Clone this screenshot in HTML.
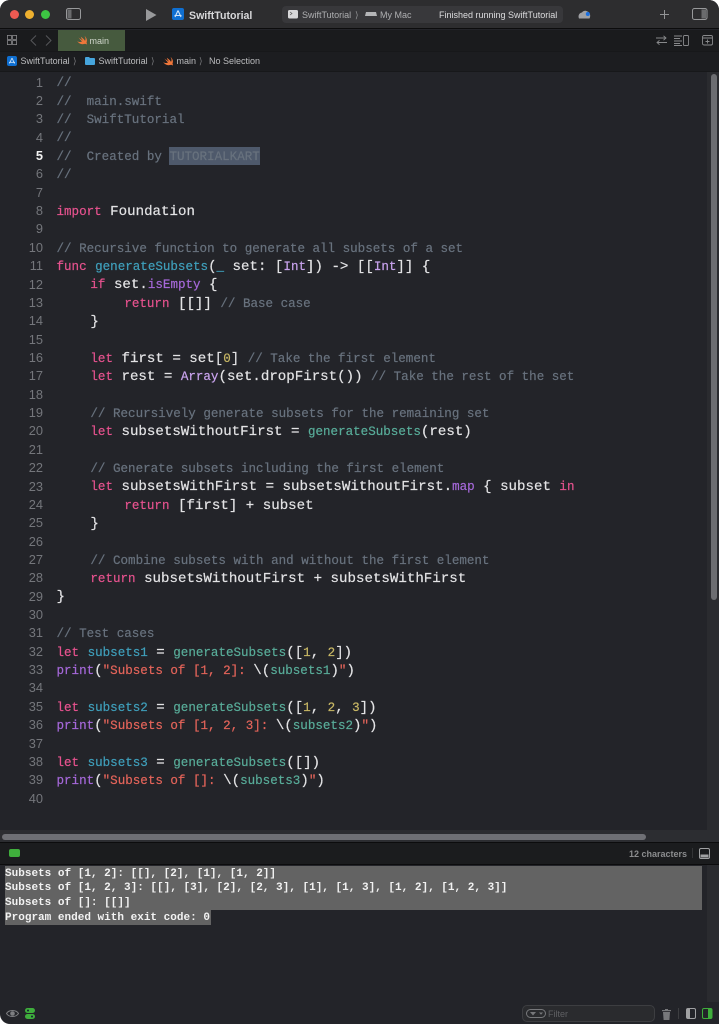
<!DOCTYPE html>
<html><head><meta charset="utf-8"><style>
html,body{margin:0;padding:0;background:#fff;width:719px;height:1024px;overflow:hidden}
*{box-sizing:border-box}
#w{position:absolute;left:0;top:0;width:719px;height:1024px;background:#232429;border-radius:10px 10px 0 10px;overflow:hidden;font-family:"Liberation Sans",sans-serif}
.a{position:absolute}
.t{position:absolute;white-space:pre;font-size:9px;line-height:12px;color:#c4c5c7}
#code{position:absolute;left:56.5px;top:74.4px;font:14.13px "Liberation Mono",monospace;color:#e3e3e5;-webkit-text-stroke:.2px}
#code .l{white-space:pre}
#nums{position:absolute;left:10px;width:33px;top:73.6px;font:12.8px "Liberation Sans",sans-serif;color:#74767b;text-align:right}
.l{height:18.36px;line-height:18.36px}
.c,.k,.f,.g,.y,.p,.q,.s,.v{font-size:12.55px}
.c{color:#68727e}.k{color:#e6528e}.f{color:#3f9fbb}.g{color:#58ac99}.y{color:#c9b865}.p{color:#a568d9}.q{color:#c9a3ee}.s{color:#e4645a}.v{color:#3f9fbb}
#con{position:absolute;left:5px;top:866.5px;font:bold 11.03px "Liberation Mono",monospace;color:#f2f2f2}
#con div{height:14.7px;line-height:14.7px;white-space:pre}
svg{position:absolute;overflow:visible}
</style></head><body><div id="w">
<!-- title bar -->
<div class="a" style="left:0;top:0;width:719px;height:29px;background:#2d2d2f;border-bottom:1px solid #0c0c0d"></div>
<div class="a" style="left:10px;top:10px;width:9px;height:9px;border-radius:50%;background:#ee5a52"></div>
<div class="a" style="left:25px;top:10px;width:9px;height:9px;border-radius:50%;background:#eeb02f"></div>
<div class="a" style="left:41px;top:10px;width:9px;height:9px;border-radius:50%;background:#3dc443"></div>
<svg style="left:66px;top:8px" width="16" height="13"><rect x=".5" y=".5" width="14" height="11" rx="2" fill="none" stroke="#98999b"/><rect x="1.5" y="1.5" width="4" height="9" fill="#6a6b6d"/></svg>
<svg style="left:145px;top:8px" width="12" height="13"><path d="M1 1 L11.5 7 L1 13Z" fill="#98999b"/></svg>
<svg style="left:172px;top:8px" width="12" height="12"><rect width="12" height="12" rx="2" fill="#0f6fd1"/><path d="M6 2.5 L3 9 M6 2.5 L9 9 M2.5 7.5 H9.5" stroke="#cfe3f8" stroke-width="1.1" fill="none"/></svg>
<div class="t" style="left:189px;top:9.5px;font-size:10.6px;font-weight:bold;color:#d8d8da">SwiftTutorial</div>
<div class="a" style="left:282px;top:6px;width:281px;height:17px;border-radius:4px;background:#38383b"></div>
<svg style="left:288px;top:10px" width="10" height="9"><rect width="10" height="8.5" rx="1.5" fill="#d8d8da"/><path d="M2 2 L4 3.5 L2 5" stroke="#555" fill="none" stroke-width=".7"/></svg>
<div class="t" style="left:302px;top:9px;color:#aeafb1">SwiftTutorial</div>
<div class="t" style="left:355px;top:9px;color:#8f9092">⟩</div>
<svg style="left:365px;top:12px" width="12" height="5"><path d="M1 0 H11 L12 4 H0Z" fill="#b4b5b7"/></svg>
<div class="t" style="left:380px;top:9px;color:#aeafb1">My Mac</div>
<div class="t" style="left:439px;top:9px;color:#dcdcde">Finished running SwiftTutorial</div>
<svg style="left:578px;top:10px" width="14" height="9"><path d="M1 8.5 C-.5 5 2 2.5 4 2.5 C5 .5 8 .2 9.5 1.5 C12 2 13 6 11.5 8.5Z" fill="#9fa0a3"/><circle cx="9.8" cy="4" r="2" fill="#1a6fe0"/></svg>
<svg style="left:660px;top:10px" width="9" height="9"><path d="M4.5 0 V9 M0 4.5 H9" stroke="#929395" stroke-width="1"/></svg>
<svg style="left:692px;top:8px" width="16" height="13"><rect x=".5" y=".5" width="14.5" height="11" rx="2" fill="none" stroke="#98999b"/><rect x="9.5" y="1.5" width="4.5" height="9" fill="#6a6b6d"/></svg>
<!-- tab bar -->
<div class="a" style="left:0;top:30px;width:719px;height:21px;background:#1a1b1d"></div>
<svg style="left:7px;top:35px" width="10" height="10" fill="none" stroke="#88898b" stroke-width=".8"><rect x=".4" y=".4" width="4" height="4"/><rect x="5.6" y=".4" width="4" height="4"/><rect x=".4" y="5.6" width="4" height="4"/><rect x="5.6" y="5.6" width="4" height="4"/></svg>
<svg style="left:30px;top:35px" width="24" height="11" fill="none" stroke="#56575a" stroke-width="1"><path d="M6 .5 L1 5.5 L6 10.5"/><path d="M16 .5 L21 5.5 L16 10.5"/></svg>
<div class="a" style="left:58px;top:30px;width:67px;height:21px;background:#465a3e"></div>
<svg style="left:77px;top:36px" width="10" height="9" viewBox="0 0 10 9"><path d="M0 5 C2 6.5 4 6 5 5.5 C3.5 4 2.3 2.7 1.5 1.5 C3 2.8 5 4 6 4.6 C5 3.2 4 2 3.8.8 C5.5 2 7.5 3.5 8 5 C9 3 8.5 1.5 7.5 0 C9.7 1.5 10.5 4.5 9.5 6.5 C9.8 7.2 10 8 9.8 8.6 C9 7.6 8 7.8 7 8 C4.5 8.8 2 7.5 0 5Z" fill="#f0773a"/></svg>
<div class="t" style="left:89.5px;top:35px;color:#d0d6cc">main</div>
<svg style="left:656px;top:35px" width="11" height="11" fill="none" stroke="#88898b" stroke-width=".9"><path d="M0 3 H10 M7.5 .8 L10 3 L7.5 5.2 M11 7.5 H1 M3.5 5.3 L1 7.5 L3.5 9.7"/></svg>
<svg style="left:674px;top:35px" width="15" height="11" fill="none" stroke="#88898b" stroke-width=".9"><path d="M0 1 H8 M0 3.5 H6 M0 6 H8 M0 8.5 H6 M0 10.5 H8"/><rect x="9.5" y=".5" width="5" height="10" rx="1"/></svg>
<svg style="left:702px;top:35px" width="11" height="11" fill="none" stroke="#88898b" stroke-width=".9"><rect x=".5" y=".5" width="10" height="9.5" rx="1.5"/><path d="M.5 3 H10.5 M5.5 4.5 V8.5 M3.5 6.5 H7.5"/></svg>
<!-- path bar -->
<div class="a" style="left:0;top:51px;width:719px;height:21px;background:#1c1d20;border-top:1px solid #17181a;border-bottom:1px solid #17181a"></div>
<svg style="left:7px;top:56px" width="10" height="10"><rect width="10" height="10" rx="2" fill="#0f6fd1"/><path d="M5 2 L2.5 7.5 M5 2 L7.5 7.5 M2 6.3 H8" stroke="#cfe3f8" stroke-width=".9" fill="none"/></svg>
<div class="t" style="left:20.5px;top:55px;color:#bcbdbf">SwiftTutorial</div>
<div class="t" style="left:73px;top:55px;color:#77787b">⟩</div>
<svg style="left:85px;top:57px" width="10" height="8"><path d="M0 1 Q0 0 1 0 H4 L5 1 H9 Q10 1 10 2 V7 Q10 8 9 8 H1 Q0 8 0 7Z" fill="#46a5dc"/></svg>
<div class="t" style="left:98.5px;top:55px;color:#bcbdbf">SwiftTutorial</div>
<div class="t" style="left:151px;top:55px;color:#77787b">⟩</div>
<svg style="left:163px;top:57px" width="10" height="9" viewBox="0 0 10 9"><path d="M0 5 C2 6.5 4 6 5 5.5 C3.5 4 2.3 2.7 1.5 1.5 C3 2.8 5 4 6 4.6 C5 3.2 4 2 3.8.8 C5.5 2 7.5 3.5 8 5 C9 3 8.5 1.5 7.5 0 C9.7 1.5 10.5 4.5 9.5 6.5 C9.8 7.2 10 8 9.8 8.6 C9 7.6 8 7.8 7 8 C4.5 8.8 2 7.5 0 5Z" fill="#f0773a"/></svg>
<div class="t" style="left:176.5px;top:55px;color:#bcbdbf">main</div>
<div class="t" style="left:199px;top:55px;color:#77787b">⟩</div>
<div class="t" style="left:209px;top:55px;color:#bcbdbf">No Selection</div>
<!-- scrollbars -->
<div class="a" style="left:707px;top:72px;width:12px;height:758px;background:#2a2b2f"></div>
<div class="a" style="left:711px;top:74px;width:6px;height:526px;border-radius:3px;background:#6c6d71"></div>
<div class="a" style="left:0;top:830px;width:719px;height:12px;background:#2c2d31"></div>
<div class="a" style="left:2px;top:834px;width:644px;height:6px;border-radius:3px;background:#6f7075"></div>
<!-- code -->
<div id="nums"><div class="l">1</div><div class="l">2</div><div class="l">3</div><div class="l">4</div><div class="l" style="color:#f2f2f2;font-weight:bold">5</div><div class="l">6</div><div class="l">7</div><div class="l">8</div><div class="l">9</div><div class="l">10</div><div class="l">11</div><div class="l">12</div><div class="l">13</div><div class="l">14</div><div class="l">15</div><div class="l">16</div><div class="l">17</div><div class="l">18</div><div class="l">19</div><div class="l">20</div><div class="l">21</div><div class="l">22</div><div class="l">23</div><div class="l">24</div><div class="l">25</div><div class="l">26</div><div class="l">27</div><div class="l">28</div><div class="l">29</div><div class="l">30</div><div class="l">31</div><div class="l">32</div><div class="l">33</div><div class="l">34</div><div class="l">35</div><div class="l">36</div><div class="l">37</div><div class="l">38</div><div class="l">39</div><div class="l">40</div></div>
<div class="a" style="left:169px;top:147px;width:91px;height:18px;background:#4e596b"></div>
<div id="code">
<div class="l"><span class="c">//</span></div>
<div class="l"><span class="c">//  main.swift</span></div>
<div class="l"><span class="c">//  SwiftTutorial</span></div>
<div class="l"><span class="c">//</span></div>
<div class="l"><span class="c">//  Created by TUTORIALKART</span></div>
<div class="l"><span class="c">//</span></div>
<div class="l"></div>
<div class="l"><span class="k">import</span> Foundation</div>
<div class="l"></div>
<div class="l"><span class="c">// Recursive function to generate all subsets of a set</span></div>
<div class="l"><span class="k">func</span> <span class="f">generateSubsets</span>(<span class="f">_</span> set: [<span class="q">Int</span>]) -&gt; [[<span class="q">Int</span>]] {</div>
<div class="l">    <span class="k">if</span> set.<span class="p">isEmpty</span> {</div>
<div class="l">        <span class="k">return</span> [[]] <span class="c">// Base case</span></div>
<div class="l">    }</div>
<div class="l"></div>
<div class="l">    <span class="k">let</span> first = set[<span class="y">0</span>] <span class="c">// Take the first element</span></div>
<div class="l">    <span class="k">let</span> rest = <span class="q">Array</span>(set.dropFirst()) <span class="c">// Take the rest of the set</span></div>
<div class="l"></div>
<div class="l">    <span class="c">// Recursively generate subsets for the remaining set</span></div>
<div class="l">    <span class="k">let</span> subsetsWithoutFirst = <span class="g">generateSubsets</span>(rest)</div>
<div class="l"></div>
<div class="l">    <span class="c">// Generate subsets including the first element</span></div>
<div class="l">    <span class="k">let</span> subsetsWithFirst = subsetsWithoutFirst.<span class="p">map</span> { subset <span class="k">in</span></div>
<div class="l">        <span class="k">return</span> [first] + subset</div>
<div class="l">    }</div>
<div class="l"></div>
<div class="l">    <span class="c">// Combine subsets with and without the first element</span></div>
<div class="l">    <span class="k">return</span> subsetsWithoutFirst + subsetsWithFirst</div>
<div class="l">}</div>
<div class="l"></div>
<div class="l"><span class="c">// Test cases</span></div>
<div class="l"><span class="k">let</span> <span class="v">subsets1</span> = <span class="g">generateSubsets</span>([<span class="y">1</span>, <span class="y">2</span>])</div>
<div class="l"><span class="p">print</span>(<span class="s">"Subsets of [1, 2]: </span>\(<span class="g">subsets1</span>)<span class="s">"</span>)</div>
<div class="l"></div>
<div class="l"><span class="k">let</span> <span class="v">subsets2</span> = <span class="g">generateSubsets</span>([<span class="y">1</span>, <span class="y">2</span>, <span class="y">3</span>])</div>
<div class="l"><span class="p">print</span>(<span class="s">"Subsets of [1, 2, 3]: </span>\(<span class="g">subsets2</span>)<span class="s">"</span>)</div>
<div class="l"></div>
<div class="l"><span class="k">let</span> <span class="v">subsets3</span> = <span class="g">generateSubsets</span>([])</div>
<div class="l"><span class="p">print</span>(<span class="s">"Subsets of []: </span>\(<span class="g">subsets3</span>)<span class="s">"</span>)</div>
<div class="l"></div>
</div>
<!-- debug bar -->
<div class="a" style="left:0;top:842px;width:719px;height:23px;background:#1b1c1e;border-top:1px solid #0c0c0d;border-bottom:1px solid #0c0c0d"></div>
<div class="a" style="left:9px;top:849px;width:11px;height:8px;border-radius:2px;background:#3fae3c"></div>
<div class="t" style="left:629px;top:848px;font-weight:bold;color:#8b8c8e">12 characters</div>
<div class="a" style="left:692px;top:848px;width:1px;height:10px;background:#333436"></div>
<svg style="left:699px;top:848px" width="11" height="11"><rect x=".5" y=".5" width="10" height="10" rx="1.5" fill="none" stroke="#a0a1a3"/><rect x="1.5" y="6.5" width="8" height="3" fill="#a0a1a3"/></svg>
<!-- console -->
<div class="a" style="left:707px;top:865px;width:12px;height:137px;background:#2a2b2f"></div>
<div class="a" style="left:5px;top:866px;width:697px;height:44px;background:#636363"></div>
<div class="a" style="left:5px;top:910px;width:206px;height:15px;background:#636363"></div>
<div id="con"><div>Subsets of [1, 2]: [[], [2], [1], [1, 2]]</div><div>Subsets of [1, 2, 3]: [[], [3], [2], [2, 3], [1], [1, 3], [1, 2], [1, 2, 3]]</div><div>Subsets of []: [[]]</div><div>Program ended with exit code: 0</div></div>
<!-- bottom bar -->
<svg style="left:6px;top:1009px" width="13" height="9"><path d="M.5 4.5 C3 .5 10 .5 12.5 4.5 C10 8.5 3 8.5 .5 4.5Z" fill="none" stroke="#7e7f82"/><circle cx="6.5" cy="4.5" r="2.3" fill="#7e7f82"/></svg>
<svg style="left:25px;top:1008px" width="10" height="11"><rect width="10" height="5" rx="2.5" fill="#3fae3c"/><rect y="6" width="10" height="5" rx="2.5" fill="#3fae3c"/><circle cx="3" cy="2.5" r="1" fill="#123"/><circle cx="7" cy="8.5" r="1" fill="#123"/></svg>
<div class="a" style="left:522px;top:1005px;width:133px;height:17px;border-radius:5px;background:#2a2b2e;border:1px solid #3d3e41"></div>
<svg style="left:526px;top:1009px" width="20" height="9"><rect x=".5" y=".5" width="19" height="8" rx="4" fill="none" stroke="#77787b"/><path d="M4 3 H10 L7 6.5Z M13 3.5 H17 L15 5.8Z" fill="#77787b"/></svg>
<div class="t" style="left:548px;top:1008px;color:#5f6063">Filter</div>
<svg style="left:662px;top:1009px" width="9" height="11" fill="#77787b"><rect x="0" y="1" width="9" height="1.2"/><rect x="3" y="0" width="3" height="1.2"/><path d="M1 3 H8 L7.4 11 H1.6Z"/></svg>
<div class="a" style="left:678px;top:1008px;width:1px;height:11px;background:#3d3e41"></div>
<svg style="left:686px;top:1008px" width="10" height="11"><rect x=".5" y=".5" width="9" height="10" rx="1.5" fill="none" stroke="#a0a1a3"/><rect x="1" y="1" width="3" height="9" fill="#a0a1a3"/></svg>
<svg style="left:702px;top:1008px" width="11" height="11"><rect x=".5" y=".5" width="9.5" height="10" rx="1.5" fill="none" stroke="#3fae3c"/><rect x="6" y="1" width="3.5" height="9" fill="#3fae3c"/></svg>
</div></body></html>
